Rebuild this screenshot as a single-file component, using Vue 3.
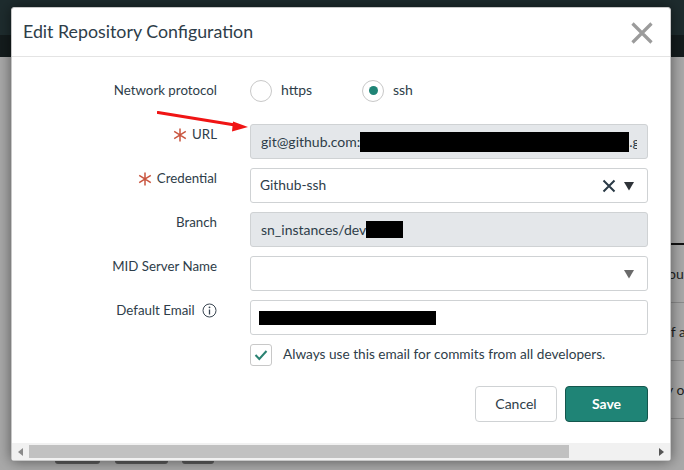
<script setup>
const rightRows = [
  { text: 'ou' },
  { text: 'of a' },
  { text: 'y o' },
]
</script>

<template>
  <div class="page">
    <div class="topbar"></div>
    <div class="subbar"></div>
    <div class="behind">
      <div class="side-rows">
        <div v-for="r in rightRows" :key="r.text" class="side-row">{{ r.text }}</div>
      </div>
      <div class="bottom-tabs"><i class="t1"></i><i class="t2"></i><i class="t3"></i></div>
    </div>

    <div class="dialog">
      <header class="head">
        <h1>Edit Repository Configuration</h1>
        <svg class="close" width="22" height="22" viewBox="0 0 22 22"><path d="M1.5 1.5 20.5 20.5M20.5 1.5 1.5 20.5" stroke="#9b9b9b" stroke-width="3.2" fill="none"/></svg>
      </header>

      <div class="body">
        <div class="row radios">
          <label class="lab">Network protocol</label>
          <div class="ctl radio-group">
            <span class="radio"></span><span class="rtext">https</span>
            <span class="radio on"><b></b></span><span class="rtext">ssh</span>
          </div>
        </div>

        <div class="row">
          <label class="lab"><span class="req"><svg width="14" height="14" viewBox="0 0 14 14"><path d="M7 0.5V13.5M1.2 3.4 12.8 10.6M12.8 3.4 1.2 10.6" stroke="#c9553f" stroke-width="1.5" fill="none"/></svg></span>URL</label>
          <div class="ctl input ro">git@github.com:<span class="mask url-mask"></span><span class="clip">.g</span></div>
        </div>

        <div class="row">
          <label class="lab"><span class="req"><svg width="14" height="14" viewBox="0 0 14 14"><path d="M7 0.5V13.5M1.2 3.4 12.8 10.6M12.8 3.4 1.2 10.6" stroke="#c9553f" stroke-width="1.5" fill="none"/></svg></span>Credential</label>
          <div class="ctl input sel">
            <span class="seltext">Github-ssh</span>
            <svg class="clear" width="14" height="14" viewBox="0 0 14 14"><path d="M1.5 1.5 12.5 12.5M12.5 1.5 1.5 12.5" stroke="#2a3a46" stroke-width="2" fill="none"/></svg>
            <svg width="12" height="10" viewBox="0 0 12 10"><path d="M1 1H11L6 9.500Z" fill="#2e3338"/></svg>
          </div>
        </div>

        <div class="row">
          <label class="lab">Branch</label>
          <div class="ctl input ro">sn_instances/dev<span class="mask branch-mask"></span></div>
        </div>

        <div class="row">
          <label class="lab">MID Server Name</label>
          <div class="ctl input sel">
            <span class="seltext"></span>
            <svg width="12" height="10" viewBox="0 0 12 10"><path d="M1 1H11L6 9.500Z" fill="#6a6a6a"/></svg>
          </div>
        </div>

        <div class="row">
          <label class="lab">Default Email
            <svg class="info" width="15" height="15" viewBox="0 0 15 15"><circle cx="7.500" cy="7.500" r="6.500" fill="none" stroke="#3a4652" stroke-width="1"/><path d="M7.500 6.500V11.500" stroke="#3a4652" stroke-width="1.300"/><circle cx="7.500" cy="4.300" r="0.900" fill="#3a4652"/></svg>
          </label>
          <div class="ctl input mail"><span class="mask mail-mask"></span></div>
        </div>

        <div class="row check-row">
          <span class="lab"></span>
          <div class="ctl checkline">
            <span class="check"><svg width="16" height="14" viewBox="0 0 16 14"><path d="M2.500 7 6.300 11 13.500 3" stroke="#2a8272" stroke-width="2" fill="none"/></svg></span>
            <span class="ctext">Always use this email for commits from all developers.</span>
          </div>
        </div>

        <div class="actions">
          <button class="btn">Cancel</button>
          <button class="btn save">Save</button>
        </div>
      </div>

      <div class="scroll">
        <svg width="5" height="8" viewBox="0 0 5 8"><path d="M5 0V8L0 4Z" fill="#8a8a8a"/></svg>
        <div class="track"><div class="thumb"></div></div>
        <svg width="5" height="8" viewBox="0 0 5 8"><path d="M0 0V8L5 4Z" fill="#555"/></svg>
      </div>
    </div>

    <svg class="arrow" width="100" height="24" viewBox="0 0 100 24"><path d="M1 1.500 78 14" stroke="#f01414" stroke-width="3" stroke-linecap="round" fill="none"/><path d="M91 16 76 10.500 75 20.500Z" fill="#f01414"/></svg>
  </div>
</template>

<style>
html, body { margin: 0; overflow: hidden; }
</style>

<style scoped>
.page {
  position: relative;
  width: 684px;
  height: 470px;
  overflow: hidden;
  background: #a9a9a9;
  font-family: Lato, "Noto Sans", sans-serif;
  color: #2e3d49;
}
.topbar { height: 35px; background: #1e2c2e; }
.subbar { height: 22px; background: #141c1d; }
.behind { position: relative; height: 413px; }
.side-rows { position: absolute; left: 663px; top: 186px; width: 21px; border-top: 2px solid #111; }
.side-row { height: 57px; line-height: 58px; font-size: 14px; color: #222; white-space: nowrap; border-bottom: 1px solid #8b8b8b; overflow: hidden; }
.side-row:nth-child(1) { padding-left: 5px; }
.side-row:nth-child(3) { padding-left: 3px; }
.bottom-tabs { position: absolute; top: 404px; left: 55px; display: flex; }
.bottom-tabs i { display: block; height: 3px; background: #5c5c5c; border-radius: 0 0 3px 3px; }
.t1 { width: 45px; margin-right: 15px; }
.t2 { width: 53px; margin-right: 14px; }
.t3 { width: 32px; }

.dialog {
  position: absolute;
  left: 11px;
  top: 7px;
  width: 660px;
  height: 454px;
  box-sizing: border-box;
  background: #fff;
  border-radius: 3px;
  border: 1px solid #c8c8c8;
  box-shadow: 0 0 14px rgba(0, 0, 0, 0.5);
  display: flex;
  flex-direction: column;
}
.arrow { position: absolute; left: 157px; top: 111px; }
.head {
  height: 49px;
  flex: none;
  box-sizing: border-box;
  border-bottom: 1px solid #e4e4e4;
  display: flex;
  align-items: center;
  justify-content: space-between;
  padding: 0 17px 0 11px;
}
h1 { margin: 0 0 2px; font-size: 17.800px; font-weight: 400; color: #2e3d49; }
.close { margin-top: 2px; }
.body { flex: 1; padding-top: 22px; }
.row { display: flex; height: 44px; }
.lab {
  width: 205px;
  flex: none;
  box-sizing: border-box;
  text-align: right;
  font-size: 13.300px;
  padding-top: 1px;
  line-height: 18px;
}
.radios .lab { padding-top: 2px; }
.req { display: inline-block; vertical-align: -3px; margin-right: 5px; }
.req svg { display: block; }
.ctl { margin-left: 33px; width: 398px; box-sizing: border-box; font-size: 14px; }
.input { height: 35px; border: 1px solid #cfd2d4; border-radius: 3px; display: flex; align-items: center; padding: 0 10px; }
.ro { background: #e4e7ea; white-space: nowrap; overflow: hidden; }
.radios { height: 45px; }
.radio-group { display: flex; align-items: center; height: 23px; }
.radio { width: 22px; height: 22px; border: 1px solid #c8c8c8; border-radius: 50%; box-sizing: border-box; display: flex; align-items: center; justify-content: center; flex: none; }
.radio.on b { width: 9px; height: 9px; border-radius: 50%; background: #1f8476; }
.rtext { margin-left: 9px; width: 81px; padding-bottom: 2px; }
.rtext:last-child { width: auto; }
.mask { background: #000; display: inline-block; flex: none; }
.url-mask { width: 269px; height: 20px; }
.clip { width: 9px; overflow: hidden; }
.branch-mask { width: 37px; height: 17px; }
.mail-mask { width: 177px; height: 14px; margin-left: -2px; }
.sel { justify-content: space-between; padding-right: 12px; }
.seltext { flex: 1; margin-left: -1px; padding-bottom: 2px; font-size: 13.800px; }
.clear { margin-right: 7px; }
.info { vertical-align: -3px; margin-left: 4px; }
.check-row { height: 36px; }
.checkline { display: flex; align-items: center; height: 22px; }
.check { width: 22px; height: 22px; box-sizing: border-box; border: 1px solid #c8c8c8; border-radius: 3px; display: flex; align-items: center; justify-content: center; flex: none; }
.ctext { margin-left: 11px; font-size: 13.650px; white-space: nowrap; padding-bottom: 3px; }
.actions { display: flex; justify-content: flex-end; gap: 8px; padding-right: 22px; margin-top: 6px; }
.btn { width: 82px; height: 36px; border: 1px solid #cfd2d4; border-radius: 4px; background: #fff; font: 14px Lato, "Noto Sans", sans-serif; color: #2e3d49; padding: 0 0 2px; }
.save { width: 83px; background: #1f8476; border-color: #14564d; color: #fff; font-weight: 700; }
.scroll { height: 17px; flex: none; background: #f1f1f1; display: flex; align-items: center; padding: 0 6px; gap: 6px; }
.track { flex: 1; height: 13px; }
.thumb { width: 540px; height: 13px; background: #c1c1c1; }
</style>
